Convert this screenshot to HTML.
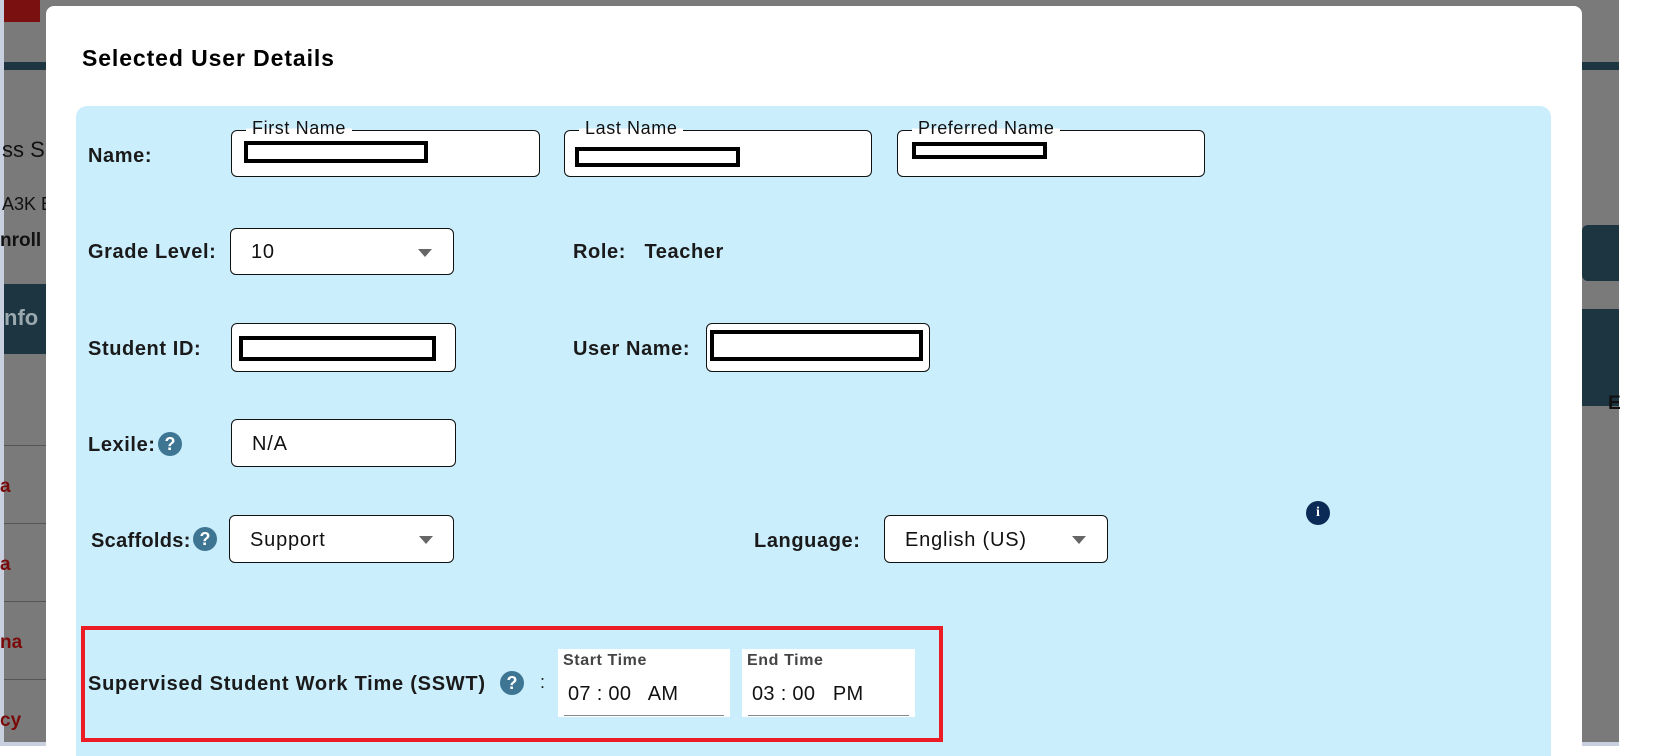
<!DOCTYPE html>
<html><head><meta charset="utf-8"><style>
*{box-sizing:border-box;margin:0;padding:0}
body{width:1672px;height:746px;overflow:hidden;background:#fff;font-family:"Liberation Sans",sans-serif;position:relative}
.a{position:absolute}
.bd{left:0;top:0;width:1619px;height:746px;background:#7a7a7a}
.lbl{position:absolute;font-weight:bold;font-size:20px;letter-spacing:0.6px;color:#1a1a1a;white-space:nowrap}
.box{position:absolute;background:#fff;border:1.5px solid #111;border-radius:6px}
.val{position:absolute;font-size:20px;letter-spacing:0.8px;color:#111;white-space:nowrap}
.red{position:absolute;border:4px solid #000}
.leg{position:absolute;top:-12px;padding:0 6px;font-size:18px;letter-spacing:0.6px;line-height:19px;color:#111;background:linear-gradient(#cbeefd 50%,#fff 50%);white-space:nowrap}
.q{position:absolute;width:24px;height:24px;border-radius:50%;background:#3d7593;color:#fff;font-weight:bold;font-size:18px;text-align:center;line-height:24px}
.tri{position:absolute;width:0;height:0;border-left:7px solid transparent;border-right:7px solid transparent;border-top:8px solid #666}
</style></head><body>
<div class="a bd"></div>
<div class="a" style="left:0;top:0;width:4px;height:746px;background:#c8d0df"></div>
<div class="a" style="left:4px;top:0;width:36px;height:22px;background:#7a1010"></div>
<div class="a" style="left:4px;top:62px;width:1615px;height:8px;background:#1c3540"></div>
<div class="a" style="left:4px;top:284px;width:42px;height:70px;background:#1c3540"></div>
<div class="a" style="left:4px;top:305px;font-size:22px;font-weight:bold;color:#9aa8ae">nfo</div>
<div class="a" style="left:2px;top:137px;font-size:22px;color:#111">ss S</div>
<div class="a" style="left:2px;top:194px;font-size:18px;color:#111">A3K E</div>
<div class="a" style="left:0;top:230px;font-size:19px;font-weight:bold;color:#111">nroll</div>
<div class="a" style="left:4px;top:445px;width:42px;height:1px;background:#555"></div>
<div class="a" style="left:4px;top:523px;width:42px;height:1px;background:#555"></div>
<div class="a" style="left:4px;top:601px;width:42px;height:1px;background:#555"></div>
<div class="a" style="left:4px;top:679px;width:42px;height:1px;background:#555"></div>
<div class="a" style="left:0;top:476px;font-size:19px;font-weight:bold;color:#7a0a0a">a</div>
<div class="a" style="left:0;top:554px;font-size:19px;font-weight:bold;color:#7a0a0a">a</div>
<div class="a" style="left:0;top:632px;font-size:19px;font-weight:bold;color:#7a0a0a">na</div>
<div class="a" style="left:0;top:710px;font-size:19px;font-weight:bold;color:#7a0a0a">cy</div>
<div class="a" style="left:1582px;top:225px;width:37px;height:56px;background:#1c3540;border-radius:6px 0 0 6px"></div>
<div class="a" style="left:1582px;top:309px;width:37px;height:97px;background:#1c3540"></div>
<div class="a" style="left:1608px;top:393px;font-size:19px;font-weight:bold;color:#111">E</div>
<div class="a" style="left:0;top:742px;width:1619px;height:4px;background:#c8d0df"></div>

<div class="a" style="left:46px;top:6px;width:1536px;height:746px;background:#fff;border-radius:8px 8px 0 0"></div>
<div class="a" style="left:82px;top:45px;font-size:23px;letter-spacing:0.9px;font-weight:bold;color:#000">Selected User Details</div>
<div class="a" style="left:76px;top:106px;width:1475px;height:650px;background:#cbeefd;border-radius:11px 11px 0 0"></div>

<div class="lbl" style="left:88px;top:145px">Name:</div>
<div class="box" style="left:231px;top:130px;width:309px;height:47px"><div class="leg" style="left:14px">First Name</div><div class="red" style="left:12px;top:10px;width:184px;height:22px"></div></div>
<div class="box" style="left:564px;top:130px;width:308px;height:47px"><div class="leg" style="left:14px">Last Name</div><div class="red" style="left:10px;top:16px;width:165px;height:20px"></div></div>
<div class="box" style="left:897px;top:130px;width:308px;height:47px"><div class="leg" style="left:14px">Preferred Name</div><div class="red" style="left:14px;top:11px;width:135px;height:17px"></div></div>

<div class="lbl" style="left:88px;top:241px">Grade Level:</div>
<div class="box" style="left:230px;top:228px;width:224px;height:47px"><div class="val" style="left:20px;top:12px">10</div><div class="tri" style="left:187px;top:20px"></div></div>
<div class="lbl" style="left:573px;top:241px">Role:&nbsp;&nbsp; Teacher</div>

<div class="lbl" style="left:88px;top:338px">Student ID:</div>
<div class="box" style="left:231px;top:323px;width:225px;height:49px"><div class="red" style="left:7px;top:12px;width:197px;height:25px"></div></div>
<div class="lbl" style="left:573px;top:338px">User Name:</div>
<div class="box" style="left:706px;top:323px;width:224px;height:49px"><div class="red" style="left:3px;top:6px;width:213px;height:31px"></div></div>

<div class="lbl" style="left:88px;top:434px">Lexile:</div>
<div class="q" style="left:158px;top:432px">?</div>
<div class="box" style="left:231px;top:419px;width:225px;height:48px"><div class="val" style="left:20px;top:13px">N/A</div></div>

<div class="lbl" style="left:91px;top:530px;letter-spacing:0.3px">Scaffolds:</div>
<div class="q" style="left:193px;top:527px">?</div>
<div class="box" style="left:229px;top:515px;width:225px;height:48px"><div class="val" style="left:20px;top:13px">Support</div><div class="tri" style="left:189px;top:20px"></div></div>
<div class="lbl" style="left:754px;top:530px">Language:</div>
<div class="box" style="left:884px;top:515px;width:224px;height:48px"><div class="val" style="left:20px;top:13px">English (US)</div><div class="tri" style="left:187px;top:20px"></div></div>
<div class="a" style="left:1306px;top:501px;width:24px;height:24px;border-radius:50%;background:#0b2a55;color:#fff;font-weight:bold;font-size:14px;text-align:center;line-height:24px;font-family:'Liberation Serif',serif">i</div>

<div class="a" style="left:81px;top:626px;width:862px;height:116px;border:4px solid #ec1c24"></div>
<div class="lbl" style="left:88px;top:673px;letter-spacing:0.75px">Supervised Student Work Time (SSWT)</div>
<div class="q" style="left:500px;top:671px">?</div>
<div class="a" style="left:540px;top:672px;font-size:18px;color:#222">:</div>
<div class="a" style="left:558px;top:649px;width:172px;height:68px;background:#fff"><div class="a" style="left:5px;top:3px;font-size:16px;letter-spacing:0.6px;font-weight:bold;color:#444">Start Time</div><div class="a" style="left:10px;top:34px;font-size:20px;letter-spacing:0.3px;color:#111;white-space:nowrap">07 : 00&nbsp;&nbsp; AM</div><div class="a" style="left:6px;top:66px;width:160px;height:1px;background:#888"></div></div>
<div class="a" style="left:742px;top:649px;width:173px;height:68px;background:#fff"><div class="a" style="left:5px;top:3px;font-size:16px;letter-spacing:0.6px;font-weight:bold;color:#444">End Time</div><div class="a" style="left:10px;top:34px;font-size:20px;letter-spacing:0.3px;color:#111;white-space:nowrap">03 : 00&nbsp;&nbsp; PM</div><div class="a" style="left:6px;top:66px;width:161px;height:1px;background:#888"></div></div>
</body></html>
